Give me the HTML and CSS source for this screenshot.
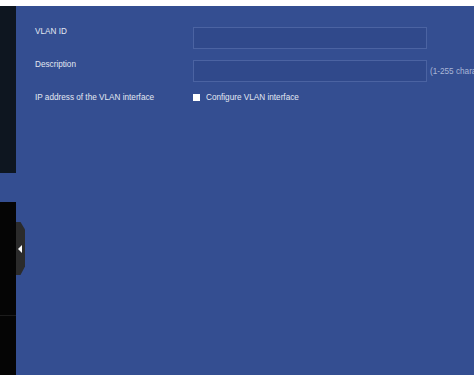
FILE: index.html
```html
<!DOCTYPE html>
<html>
<head>
<meta charset="utf-8">
<link rel="stylesheet" href="styles.css">
</head>
<body>
<div class="topbar"></div>
<div class="frame">
  <div class="sidebar">
    <div class="side-top"></div>
    <div class="side-gap"></div>
    <div class="side-bottom">
      <div class="side-line"></div>
    </div>
    <div class="handle"><span class="arrow"></span></div>
  </div>
  <div class="main">
    <div class="row">
      <div class="label">VLAN ID</div>
      <div class="field"><div class="input"></div></div>
    </div>
    <div class="row">
      <div class="label">Description</div>
      <div class="field"><div class="input"></div><span class="hint">(1-255 characters)</span></div>
    </div>
    <div class="row row-check">
      <div class="label">IP address of the VLAN interface</div>
      <div class="field"><span class="checkbox"></span><span class="check-label">Configure VLAN interface</span></div>
    </div>
  </div>
</div>
</body>
</html>
```
FILE: styles.css
```css
html, body {
  margin: 0;
  padding: 0;
  width: 474px;
  height: 375px;
  overflow: hidden;
  background: #ffffff;
  font-family: "Liberation Sans", Arial, sans-serif;
}
.topbar {
  height: 6px;
  background: #ffffff;
}
.frame {
  display: flex;
  height: 369px;
}
.sidebar {
  width: 16px;
  flex: none;
  display: flex;
  flex-direction: column;
  position: relative;
}
.side-top {
  height: 167px;
  background: #0e1620;
}
.side-gap {
  height: 29px;
  background: #344e91;
}
.side-bottom {
  flex: 1;
  background: #050505;
  padding-top: 113px;
}
.side-line {
  height: 1px;
  background: #1c1c1c;
}
.handle {
  position: absolute;
  left: 16px;
  top: 216px;
  width: 9px;
  height: 53px;
  background: #2b2b2b;
  clip-path: polygon(0 0, 50% 0, 100% 14%, 100% 84%, 50% 100%, 0 100%);
  z-index: 2;
}
.arrow {
  position: absolute;
  left: 2px;
  top: 23px;
  width: 0;
  height: 0;
  border-top: 4px solid transparent;
  border-bottom: 4px solid transparent;
  border-right: 4px solid #ffffff;
}
.main {
  flex: 1;
  min-width: 0;
  overflow: hidden;
  background: #344e91;
  padding: 21px 0 0 19px;
  color: #e3e8f2;
  font-size: 8.2px;
}
.row {
  display: flex;
  align-items: flex-start;
  height: 22px;
  margin-bottom: 11px;
}
.row-check {
  height: 12px;
}
.label {
  width: 158px;
  flex: none;
  padding-top: 0;
}
.field {
  display: flex;
  align-items: flex-start;
}
.input {
  width: 232px;
  height: 20px;
  border: 1px solid #4b63a2;
  background: #30498b;
  box-sizing: content-box;
  flex: none;
}
.hint {
  margin-left: 3px;
  margin-top: 7px;
  color: #aab7d6;
  white-space: nowrap;
}
.checkbox {
  width: 7px;
  height: 7px;
  background: #ffffff;
  display: inline-block;
  margin-right: 6px;
  margin-top: 1px;
  flex: none;
}
.check-label {
  color: #e3e8f2;
  white-space: nowrap;
}
```
